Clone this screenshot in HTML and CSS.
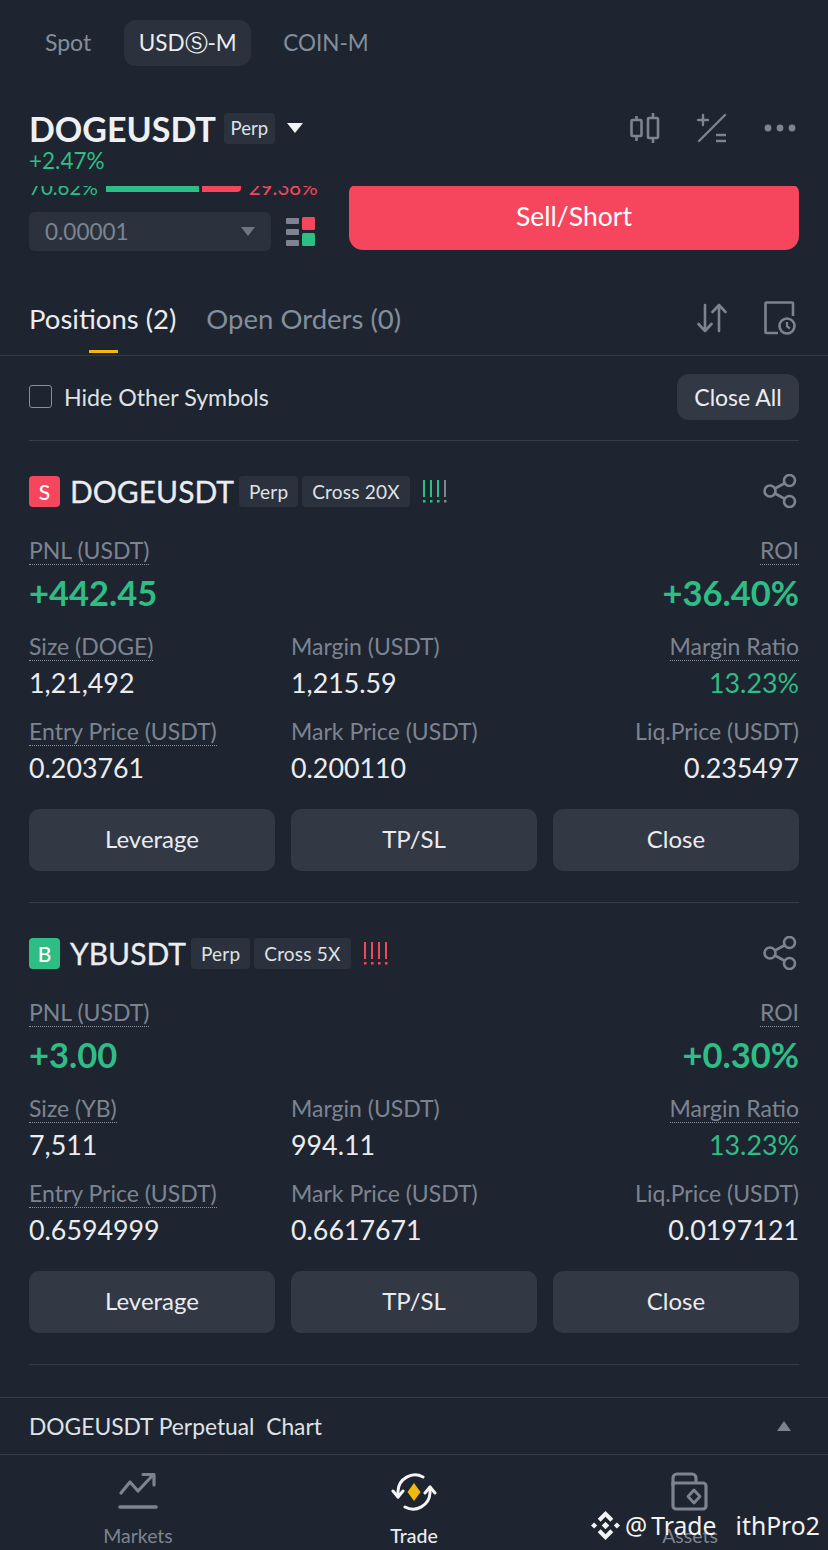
FILE: index.html
```html
<!DOCTYPE html>
<html lang="en">
<head>
<meta charset="utf-8">
<title>DOGEUSDT Positions</title>
<link rel="stylesheet" href="styles.css">
</head>
<body>
<div class="app">
  <nav class="market-tabs">
    <span class="market-tab">Spot</span>
    <span class="market-tab active">USDⓈ-M</span>
    <span class="market-tab">COIN-M</span>
  </nav>

  <header class="symbol-head">
    <div class="symbol-left">
      <div class="symbol-line">
        <span class="symbol-name">DOGEUSDT</span>
        <span class="perp-tag">Perp</span>
        <svg class="caret" viewBox="0 0 18 12"><path d="M1 1h16L9 11z" fill="#f4f5f6"/></svg>
      </div>
      <div class="symbol-change">+2.47%</div>
    </div>
    <div class="symbol-icons">
      <svg class="ico-candle" viewBox="0 0 30 32" fill="none" stroke="#7d8490" stroke-width="2.6"><rect x="1.5" y="8" width="10" height="16" rx="1"/><path d="M6.5 4v4M6.5 24v5"/><rect x="18" y="6" width="10" height="20" rx="1"/><path d="M23 1v5M23 26v5"/></svg>
      <svg class="ico-calc" viewBox="0 0 30 30" fill="none" stroke="#7d8490" stroke-width="2.4" stroke-linecap="round"><path d="M2 28 28 2M1 7h10M6 2v10"/><path d="M19 22h10M19 28h10" stroke-linecap="butt"/></svg>
      <svg class="ico-dots" viewBox="0 0 32 8" fill="#7d8490"><circle cx="4" cy="4" r="3.4"/><circle cx="16" cy="4" r="3.4"/><circle cx="28" cy="4" r="3.4"/></svg>
    </div>
  </header>

  <section class="order-clip">
    <div class="order-left">
      <div class="ratio-row">
        <span class="pct-up">70.62%</span>
        <span class="ratio-bar"><i class="bar-up"></i><i class="bar-down"></i></span>
        <span class="pct-down">29.38%</span>
      </div>
      <div class="depth-row">
        <div class="depth-select">
          <span>0.00001</span>
          <svg class="caret-sm" viewBox="0 0 14 9"><path d="M0 0h14L7 9z" fill="#6f7682"/></svg>
        </div>
        <svg class="ico-book" viewBox="0 0 30 30"><rect x="0" y="1" width="13" height="6" rx="1" fill="#7d8490"/><rect x="0" y="12" width="13" height="6" rx="1" fill="#7d8490"/><rect x="0" y="23" width="13" height="6" rx="1" fill="#7d8490"/><rect x="16" y="0" width="13" height="13" rx="1.5" fill="#f6465d"/><rect x="16" y="16" width="13" height="13" rx="1.5" fill="#2ebd85"/></svg>
      </div>
    </div>
    <div class="sell-btn">Sell/Short</div>
  </section>

  <div class="pos-tabs">
    <span class="pos-tab active">Positions (2)</span>
    <span class="pos-tab">Open Orders (0)</span>
    <span class="pos-spacer"></span>
    <svg class="ico-sort" viewBox="0 0 30 30" fill="none" stroke="#7d8490" stroke-width="2.6" stroke-linecap="round" stroke-linejoin="round"><path d="M8 2v26M1.500 21 8 28l6.500-7"/><path d="M22 28V2M15.500 9 22 2l6.500 7"/></svg>
    <svg class="ico-hist" viewBox="0 0 32 34" fill="none" stroke="#7d8490" stroke-width="2.6"><path d="M14 32H2.500a1 1 0 0 1-1-1V2.500a1 1 0 0 1 1-1H28a1 1 0 0 1 1 1V15"/><circle cx="23" cy="25" r="7.500"/><path d="M23 21v4.500l3 2" stroke-width="2.200"/></svg>
  </div>

  <div class="filter-row">
    <label class="hide-other"><span class="checkbox"></span>Hide Other Symbols</label>
    <span class="close-all">Close All</span>
  </div>

  <article class="position">
    <div class="pos-head">
      <span class="side side-s">S</span>
      <span class="pos-symbol">DOGEUSDT</span>
      <span class="tag">Perp</span>
      <span class="tag">Cross 20X</span>
      <svg class="level" viewBox="0 0 24 24"><g fill="#2ebd85"><rect x="0" y="1" width="2" height="17"/><rect x="0" y="21" width="2.500" height="2.500"/><rect x="7" y="1" width="2" height="17"/><rect x="7" y="21" width="2.500" height="2.500"/><rect x="14" y="1" width="2" height="17"/><rect x="14" y="21" width="2.500" height="2.500"/></g><g fill="#7d8490"><rect x="21" y="1" width="2" height="17"/><rect x="21" y="21" width="2.500" height="2.500"/></g></svg>
      <span class="pos-spacer"></span>
      <svg class="ico-share" viewBox="0 0 34 34" fill="none" stroke="#7d8490" stroke-width="2.6"><circle cx="7" cy="17" r="5.500"/><circle cx="26.500" cy="6.500" r="5.500"/><circle cx="26.500" cy="27.500" r="5.500"/><path d="m12 14.500 10-5.500M12 19.500l10 5.500"/></svg>
    </div>
    <div class="pnl-row">
      <div class="pnl-cell">
        <span class="label dotted">PNL (USDT)</span>
        <span class="pnl">+442.45</span>
      </div>
      <div class="pnl-cell end">
        <span class="label dotted">ROI</span>
        <span class="pnl">+36.40%</span>
      </div>
    </div>
    <div class="stats">
      <div class="stat"><span class="label dotted">Size (DOGE)</span><span class="value">1,21,492</span></div>
      <div class="stat"><span class="label">Margin (USDT)</span><span class="value">1,215.59</span></div>
      <div class="stat end"><span class="label dotted">Margin Ratio</span><span class="value up">13.23%</span></div>
      <div class="stat"><span class="label dotted">Entry Price (USDT)</span><span class="value">0.203761</span></div>
      <div class="stat"><span class="label">Mark Price (USDT)</span><span class="value">0.200110</span></div>
      <div class="stat end"><span class="label">Liq.Price (USDT)</span><span class="value">0.235497</span></div>
    </div>
    <div class="actions">
      <span class="action">Leverage</span>
      <span class="action">TP/SL</span>
      <span class="action">Close</span>
    </div>
  </article>

  <article class="position">
    <div class="pos-head">
      <span class="side side-b">B</span>
      <span class="pos-symbol">YBUSDT</span>
      <span class="tag">Perp</span>
      <span class="tag">Cross 5X</span>
      <svg class="level" viewBox="0 0 24 24"><g fill="#f6465d"><rect x="0" y="1" width="2" height="17"/><rect x="0" y="21" width="2.500" height="2.500"/><rect x="7" y="1" width="2" height="17"/><rect x="7" y="21" width="2.500" height="2.500"/><rect x="14" y="1" width="2" height="17"/><rect x="14" y="21" width="2.500" height="2.500"/><rect x="21" y="1" width="2" height="17"/><rect x="21" y="21" width="2.500" height="2.500"/></g></svg>
      <span class="pos-spacer"></span>
      <svg class="ico-share" viewBox="0 0 34 34" fill="none" stroke="#7d8490" stroke-width="2.6"><circle cx="7" cy="17" r="5.500"/><circle cx="26.500" cy="6.500" r="5.500"/><circle cx="26.500" cy="27.500" r="5.500"/><path d="m12 14.500 10-5.500M12 19.500l10 5.500"/></svg>
    </div>
    <div class="pnl-row">
      <div class="pnl-cell">
        <span class="label dotted">PNL (USDT)</span>
        <span class="pnl">+3.00</span>
      </div>
      <div class="pnl-cell end">
        <span class="label dotted">ROI</span>
        <span class="pnl">+0.30%</span>
      </div>
    </div>
    <div class="stats">
      <div class="stat"><span class="label dotted">Size (YB)</span><span class="value">7,511</span></div>
      <div class="stat"><span class="label">Margin (USDT)</span><span class="value">994.11</span></div>
      <div class="stat end"><span class="label dotted">Margin Ratio</span><span class="value up">13.23%</span></div>
      <div class="stat"><span class="label dotted">Entry Price (USDT)</span><span class="value">0.6594999</span></div>
      <div class="stat"><span class="label">Mark Price (USDT)</span><span class="value">0.6617671</span></div>
      <div class="stat end"><span class="label">Liq.Price (USDT)</span><span class="value">0.0197121</span></div>
    </div>
    <div class="actions">
      <span class="action">Leverage</span>
      <span class="action">TP/SL</span>
      <span class="action">Close</span>
    </div>
  </article>

  <div class="chart-row">
    <span>DOGEUSDT Perpetual&nbsp; Chart</span>
    <svg class="caret-up" viewBox="0 0 14 10"><path d="M7 0l7 10H0z" fill="#7d8490"/></svg>
  </div>

  <footer class="bottom-nav">
    <div class="nav-item">
      <svg class="nav-ico" viewBox="0 0 46 40" fill="none" stroke="#7d8490" stroke-width="3.200"><path d="M6 21 15 10l8 9L38 3" stroke-linecap="round" stroke-linejoin="round"/><path d="M28 2.500h11V13" stroke-linejoin="round" stroke-linecap="round"/><path d="M5 35h36" stroke-width="3.600" stroke-linecap="round"/></svg>
      <span>Markets</span>
    </div>
    <div class="nav-item current">
      <svg class="nav-ico" viewBox="0 0 46 40" fill="none" stroke="#f4f5f6" stroke-width="3" stroke-linecap="round" stroke-linejoin="round"><path d="M32 5A17 17 0 0 0 7 19v6"/><path d="M2 19l5 6 5-6"/><path d="M14 35a17 17 0 0 0 25-14v-6"/><path d="M34 21l5-6 5 6"/><path d="M23 11l6.500 9-6.500 9-6.500-9z" fill="#f0b90b" stroke="none"/></svg>
      <span>Trade</span>
    </div>
    <div class="nav-item">
      <svg class="nav-ico" viewBox="0 0 46 40" fill="none" stroke="#7d8490" stroke-width="3.200" stroke-linejoin="round"><path d="M6 14V6a4 4 0 0 1 4-4h15a4 4 0 0 1 4 4v4"/><path d="M6 11h30a3 3 0 0 1 3 3v20a3 3 0 0 1-3 3H9a3 3 0 0 1-3-3z"/><path d="M27 18l6 6.500-6 6.500-6-6.500z" stroke-width="2.800"/></svg>
      <span>Assets</span>
    </div>
  </footer>

  <div class="watermark">
    <svg class="wm-logo" viewBox="0 0 28 28" fill="#f2f3f4"><path d="M14 0l7.500 7.500-2.800 2.800L14 5.600l-4.700 4.700-2.800-2.800z"/><path d="M14 28l-7.500-7.500 2.800-2.800 4.700 4.700 4.700-4.700 2.800 2.800z"/><path d="M14 10.300l3.700 3.700-3.700 3.700-3.700-3.700z"/><path d="M0 14l3-3 3 3-3 3z"/><path d="M22 14l3-3 3 3-3 3z"/></svg>
    <span class="wm-text"><span class="wm-at">@</span>Trade&nbsp;&nbsp; ithPro2</span>
  </div>
</div>
</body>
</html>
```
FILE: styles.css
```css
* { box-sizing: border-box; }
html, body { margin: 0; padding: 0; }
body { background: #1e2530; }
.app {
  position: relative;
  width: 828px;
  height: 1550px;
  overflow: hidden;
  background: #1e2530;
  color: #eaecef;
  font-family: Lato, "Liberation Sans", sans-serif;
}
.market-tabs { display: flex; gap: 17px; padding: 20px 0 0 29px; height: 66px; }
.market-tab {
  display: flex; align-items: center; height: 46px; padding: 0 16px;
  font-size: 23px; color: #848e9c; border-radius: 12px; margin-top: -1px;
}
.market-tab.active { background: #2b323e; color: #eaecef; width: 127px; justify-content: center; padding: 0; margin-top: 0; font-size: 22.500px; }
.market-tab:last-child { padding-left: 15px; font-size: 22.500px; }

.symbol-head { display: flex; justify-content: space-between; padding: 46px 32px 0 29px; height: 120px; }
.symbol-line { display: flex; align-items: center; height: 32px; }
.symbol-name { font-size: 34px; font-weight: 700; color: #eef0f2; letter-spacing: 0; }
.perp-tag {
  margin-left: 8px; width: 51px; height: 31px; display: flex; align-items: center; justify-content: center;
  background: #2b323e; border-radius: 4px; font-size: 18.500px; color: #dfe2e6;
}
.caret { width: 18px; height: 12px; margin-left: 11px; }
.symbol-change { font-size: 22.500px; color: #2ebd85; line-height: 26px; margin-top: 4px; }
.symbol-icons { display: flex; align-items: center; height: 32px; }
.ico-candle { width: 30px; height: 32px; }
.ico-calc { width: 30px; height: 30px; margin-left: 37px; }
.ico-dots { width: 32px; height: 8px; margin-left: 37px; }

.order-clip {
  display: flex; justify-content: space-between; align-items: flex-end;
  height: 65px; overflow: hidden; padding: 0 29px;
}
.order-left { width: 290px; flex: none; }
.ratio-row { display: flex; align-items: center; height: 22px; font-size: 20.500px; white-space: nowrap; }
.pct-up { color: #2ebd85; }
.pct-down { color: #f6465d; }
.ratio-bar { display: flex; flex: none; gap: 3px; margin: 0 8px; width: 135px; height: 10px; }
.bar-up { display: block; width: 93px; background: #2ebd85; }
.bar-down { display: block; width: 39px; background: #f6465d; border-radius: 0 0 4px 0; }
.depth-row { display: flex; align-items: center; margin-top: 14px; }
.depth-select {
  display: flex; align-items: center; justify-content: space-between;
  width: 242px; height: 39px; padding: 0 16px 0 16px; background: #2b323e; border-radius: 6px;
  font-size: 22.500px; color: #7d8490;
}
.caret-sm { width: 14px; height: 9px; }
.ico-book { width: 30px; height: 30px; margin-left: 15px; }
.sell-btn {
  display: flex; align-items: center; justify-content: center;
  width: 450px; height: 65px; background: #f6465d; color: #fff; font-size: 26.500px;
  border-radius: 7px 7px 14px 14px; margin-bottom: 1px; padding-bottom: 3px;
}

.pos-tabs {
  display: flex; align-items: center; height: 105px; padding: 30px 32px 0 29px;
  border-bottom: 1px solid #363d49; position: relative;
}
.pos-tab { font-size: 27.500px; color: #848e9c; margin-right: 30px; }
.pos-tab.active { color: #eaecef; position: relative; }
.pos-tab.active::after {
  content: ""; position: absolute; left: 60px; bottom: -18px; width: 29px; height: 3px; background: #f0b90b;
}
.pos-spacer { flex: 1; }
.ico-sort { width: 30px; height: 30px; }
.ico-hist { width: 32px; height: 34px; margin-left: 37px; }

.filter-row { display: flex; align-items: center; justify-content: space-between; height: 85px; margin: 0 29px; border-bottom: 1px solid #363d49; padding-bottom: 20px; padding-top: 17px; }
.hide-other { display: flex; align-items: center; font-size: 23.200px; color: #dfe2e6; }
.checkbox { width: 23px; height: 23px; border: 1.500px solid #848e9c; border-radius: 3px; margin-right: 12px; }
.close-all {
  display: flex; align-items: center; justify-content: center; width: 122px; height: 46px;
  background: #323945; border-radius: 12px; font-size: 23px; color: #eaecef;
}

.position { margin: 0 29px; height: 462px; border-bottom: 1px solid #363d49; padding-top: 34px; }
.pos-head { display: flex; align-items: center; height: 32px; }
.side {
  width: 31px; height: 31px; border-radius: 4px; display: flex; align-items: center; justify-content: center;
  font-size: 21px; font-weight: 500; color: #fff;
}
.side-s { background: #f6465d; }
.side-b { background: #2ebd85; }
.pos-symbol { font-size: 30px; margin: 0 1px 0 10px; color: #eaecef; -webkit-text-stroke: 0.3px #eaecef; }
.tag {
  height: 31px; padding: 0 10px; margin-left: 4px; display: flex; align-items: center;
  background: #2b323e; border-radius: 4px; font-size: 19px; letter-spacing: 0.2px; color: #dfe2e6;
}
.level { width: 24px; height: 24px; margin-left: 13px; }
.ico-share { width: 34px; height: 34px; margin-right: 2px; }

.pnl-row { display: flex; justify-content: space-between; margin-top: 29px; }
.pnl-cell { display: flex; flex-direction: column; align-items: flex-start; }
.pnl-cell.end { align-items: flex-end; }
.label { font-size: 23px; color: #7d8490; line-height: 28px; height: 29px; white-space: nowrap; }
.label.dotted { border-bottom: 1px dotted #8b929e; }
.pnl { font-size: 34.500px; font-weight: 700; color: #2ebd85; line-height: 40px; margin-top: 8px; }

.stats { display: grid; grid-template-columns: 262px 1fr 1fr; row-gap: 16px; margin-top: 19px; }
.stat { display: flex; flex-direction: column; align-items: flex-start; height: 69px; }
.stat.end { align-items: flex-end; }
.value { font-size: 26.800px; color: #eaecef; line-height: 34px; margin-top: 5px; white-space: nowrap; }
.value.up { color: #2ebd85; }

.actions { display: grid; grid-template-columns: repeat(3, 1fr); gap: 16px; margin-top: 23px; }
.action {
  display: flex; align-items: center; justify-content: center; height: 62px; padding-bottom: 3px;
  background: #323945; border-radius: 10px; font-size: 24px; color: #eaecef;
}

.chart-row {
  display: flex; align-items: center; justify-content: space-between;
  height: 58px; margin-top: 32px; padding: 0 29px 0 29px;
  border-top: 1px solid #363d49; border-bottom: 1px solid #363d49;
  font-size: 22.800px; color: #dfe2e6;
}
.caret-up { width: 14px; height: 10px; margin-right: 8px; }

.bottom-nav { display: grid; grid-template-columns: repeat(3, 1fr); height: 95px; padding-top: 17px; }
.nav-item { display: flex; flex-direction: column; align-items: center; font-size: 19.500px; color: #7d8490; }
.nav-item.current { color: #eaecef; font-weight: 500; }
.nav-ico { width: 46px; height: 40px; }
.nav-item span { margin-top: 12px; line-height: 24px; }

.watermark {
  position: absolute; left: 591px; top: 1510px; display: flex; align-items: center; height: 30px; color: #f2f3f4;
}
.wm-logo { width: 29px; height: 29px; }
.wm-text { margin-left: 5px; font-family: "Noto Sans", sans-serif; font-size: 24.700px; white-space: nowrap; }
.wm-at { margin-right: 4px; }
```
